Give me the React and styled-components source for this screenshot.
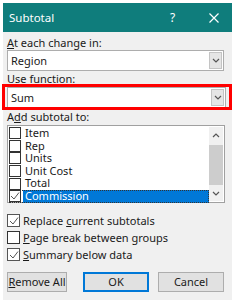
import React from 'react'
import styled, { createGlobalStyle } from 'styled-components'

const GlobalStyle = createGlobalStyle`
  body {
    margin: 0;
    background: #ffffff;
    font-family: "Noto Sans", "Open Sans", sans-serif;
    font-size: 11px;
    line-height: 14px;
    color: #1a1a1a;
  }
`

const Dialog = styled.div`
  position: relative;
  margin: 3px 0 0 3px;
  width: 229px;
  height: 297px;
  background: #f0f0f0;
`

const TitleBar = styled.div`
  height: 29px;
  background: #0f7d7c;
  color: #fff;
  display: flex;
  align-items: center;
  padding: 0 0 0 6px;
  font-size: 11.5px;
  .title { flex: 1; }
  .help { width: 39px; font-size: 12px; }
  .close { width: 23px; display: flex; }
`

const Body = styled.div`
  padding: 4px 6px 0 4px;
`

const Label = styled.div`
  height: 14px;
  line-height: 14px;
  margin-top: ${p => p.top || 0}px;
`

const Combo = styled.div`
  position: relative;
  height: 21px;
  margin-top: ${p => p.top || 0}px;
  width: ${p => p.w || 217}px;
  box-sizing: border-box;
  background: #fff;
  border: 1px solid #adadad;
  display: flex;
  align-items: center;
  padding-left: 3px;
  .value { flex: 1; }
  ${p => p.marked && `
    &::after {
      content: '';
      position: absolute;
      left: -6px;
      right: -7px;
      top: -4px;
      bottom: -3px;
      border: 3px solid #ff0000;
    }
  `}
`

const DropButton = styled.div`
  width: 13px;
  height: 17px;
  margin-right: 1px;
  background: #e5e5e5;
  border: 1px solid #c4c4c4;
  box-sizing: border-box;
  display: flex;
  align-items: center;
  justify-content: center;
`

const ListBox = styled.div`
  margin-top: 1px;
  width: 218px;
  height: 78px;
  box-sizing: border-box;
  background: #fff;
  border: 1px solid #a0a0a0;
  display: flex;
  padding: 1px;
`

const Rows = styled.div`
  flex: 1;
`

const Row = styled.div`
  height: 12.6px;
  display: flex;
  align-items: center;
  .text {
    margin-left: 2px;
    padding: 0 2px;
    flex: 1;
    height: 12.6px;
    line-height: 12.6px;
    background: ${p => (p.selected ? '#0078d7' : 'transparent')};
    color: ${p => (p.selected ? '#fff' : '#1a1a1a')};
  }
  ${p => p.selected && `
    outline: 1px dotted #333;
    outline-offset: -1px;
  `}
`

const Box = styled.div`
  width: ${p => p.size || 12}px;
  height: ${p => p.size || 12}px;
  box-sizing: border-box;
  border: 1px solid ${p => (p.soft ? '#555' : '#333')};
  background: #fff;
  flex-shrink: 0;
  display: flex;
  align-items: center;
  justify-content: center;
`

const ScrollBar = styled.div`
  width: 14px;
  display: flex;
  flex-direction: column;
  align-items: center;
  background: #f0f0f0;
  .arrow { height: 18px; display: flex; align-items: center; }
  .track { flex: 1; width: 100%; display: flex; }
  .thumb { width: 100%; height: 40px; margin-top: 2px; background: #cdcdcd; }
`

const Options = styled.div`
  margin-top: 11px;
  display: flex;
  flex-direction: column;
  gap: 4px;
`

const Option = styled.div`
  display: flex;
  align-items: center;
  height: 13px;
  gap: 3px;
`

const Buttons = styled.div`
  margin-top: 11px;
  display: flex;
  .b1 { width: 60px; }
  .b2 { width: 66px; margin-left: 16px; }
  .b3 { width: 66px; margin-left: 9px; }
`

const Button = styled.div`
  height: 20px;
  box-sizing: border-box;
  background: #e1e1e1;
  border: ${p => (p.primary ? '2px solid #0078d7' : '1px solid #adadad')};
  display: flex;
  align-items: center;
  justify-content: center;
`

const Check = () => (
  <svg width="10" height="10" viewBox="0 0 10 10">
    <path d="M1 5 L4 8 L9 1.5" fill="none" stroke="#555" strokeWidth="1" />
  </svg>
)

const Chevron = ({ up }) => (
  <svg width="8" height="5" viewBox="0 0 8 5">
    <path d={up ? 'M1 4 L4 1 L7 4' : 'M1 1 L4 4 L7 1'} fill="none" stroke="#555" strokeWidth="1.2" />
  </svg>
)

const items = ['Item', 'Rep', 'Units', 'Unit Cost', 'Total', 'Commission']

function App() {
  return (
    <>
      <GlobalStyle />
      <Dialog>
        <TitleBar>
          <span className="title">Subtotal</span>
          <span className="help">?</span>
          <span className="close">
            <svg width="10" height="10" viewBox="0 0 10 10">
              <path d="M0.5 0.5 L9.5 9.5 M9.5 0.5 L0.5 9.5" stroke="#fff" strokeWidth="1.2" />
            </svg>
          </span>
        </TitleBar>
        <Body>
          <Label><u>A</u>t each change in:</Label>
          <Combo>
            <span className="value">Region</span>
            <DropButton><Chevron /></DropButton>
          </Combo>
          <Label top={1}><u>U</u>se function:</Label>
          <Combo top={1} w={219} marked>
            <span className="value">Sum</span>
            <DropButton><Chevron /></DropButton>
          </Combo>
          <Label top={2}>A<u>d</u>d subtotal to:</Label>
          <ListBox>
            <Rows>
              {items.map((it, i) => (
                <Row key={it} selected={i === 5}>
                  <Box>{i === 5 && <Check />}</Box>
                  <span className="text">{it}</span>
                </Row>
              ))}
            </Rows>
            <ScrollBar>
              <div className="arrow"><Chevron up /></div>
              <div className="track"><div className="thumb" /></div>
              <div className="arrow"><Chevron /></div>
            </ScrollBar>
          </ListBox>
          <Options>
            <Option><Box size={13} soft><Check /></Box><span>Replace <u>c</u>urrent subtotals</span></Option>
            <Option><Box size={13} /><span><u>P</u>age break between groups</span></Option>
            <Option><Box size={13} soft><Check /></Box><span><u>S</u>ummary below data</span></Option>
          </Options>
          <Buttons>
            <Button className="b1"><span><u>R</u>emove All</span></Button>
            <Button className="b2" primary>OK</Button>
            <Button className="b3">Cancel</Button>
          </Buttons>
        </Body>
      </Dialog>
    </>
  )
}

export default App
